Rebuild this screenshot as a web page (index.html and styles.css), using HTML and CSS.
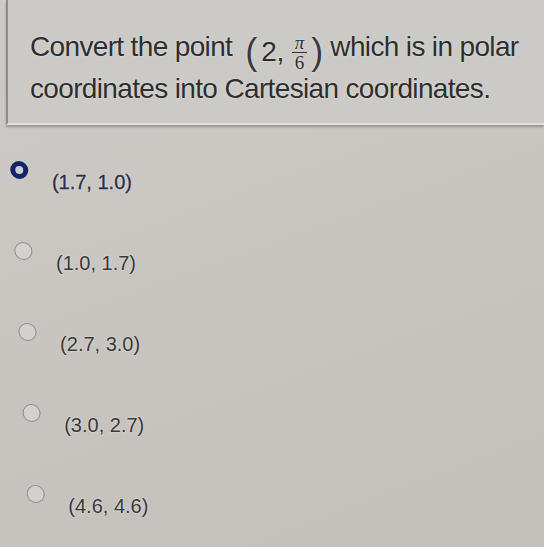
FILE: index.html
```html
<!DOCTYPE html>
<html lang="en">
<head>
<meta charset="utf-8">
<title>Polar to Cartesian</title>
<link rel="stylesheet" href="styles.css">
</head>
<body>
<div class="page">
  <div class="question">
    <p class="prompt">Convert the point <span class="math"><span class="paren">(</span><span class="num">2,</span><span class="frac"><span class="top">π</span><span class="bot">6</span></span><span class="paren">)</span></span> which is in polar coordinates into Cartesian coordinates.</p>
  </div>
  <ul class="options">
    <li class="option"><span class="radio radio-on"></span><span class="label label-on">(1.7, 1.0)</span></li>
    <li class="option"><span class="radio"></span><span class="label">(1.0, 1.7)</span></li>
    <li class="option"><span class="radio"></span><span class="label">(2.7, 3.0)</span></li>
    <li class="option"><span class="radio"></span><span class="label">(3.0, 2.7)</span></li>
    <li class="option"><span class="radio"></span><span class="label">(4.6, 4.6)</span></li>
  </ul>
</div>
</body>
</html>
```

FILE: styles.css
```css
html, body {
  margin: 0;
  padding: 0;
}
body {
  width: 544px;
  height: 547px;
  overflow: hidden;
  font-family: "Liberation Sans", Arial, sans-serif;
  background: linear-gradient(160deg, #cdcac7 0%, #c8c5c1 50%, #c3c0bc 100%);
}
.page {
  width: 544px;
  height: 547px;
}
.question {
  margin-left: 6px;
  height: 125px;
  box-sizing: border-box;
  background: #cccac7;
  border-left: 2px solid #8e8c8a;
  border-bottom: 2px solid #e2e0dd;
  box-shadow: 0 2px 2px rgba(90, 88, 85, 0.45);
  padding: 28px 6px 0 22px;
}
.prompt {
  margin: 0;
  font-size: 28px;
  letter-spacing: -0.65px;
  line-height: 37px;
  color: #2e2e2e;
  text-shadow: 0 0 2px rgba(255, 255, 255, 0.6);
}
.math {
  display: inline-flex;
  align-items: center;
  vertical-align: -8px;
  height: 37px;
  margin-left: 6px;
  letter-spacing: 0;
}
.paren {
  font-size: 36px;
  line-height: 37px;
  color: #3a3a3a;
}
.num {
  margin: 0 3px 0 4px;
  font-size: 28px;
  letter-spacing: -0.5px;
}
.frac {
  display: inline-flex;
  flex-direction: column;
  align-items: center;
  font-family: "Liberation Serif", "Times New Roman", serif;
  font-size: 19px;
  line-height: 14px;
  margin: 3px 4px 0 5px;
}
.frac .top {
  font-style: italic;
  padding: 0 3px 2px;
  border-bottom: 1.5px solid #333;
}
.frac .bot {
  padding-top: 3px;
}
.options {
  list-style: none;
  margin: 0;
  padding: 35px 0 0 0;
  transform: skewX(2.9deg);
  transform-origin: 0 0;
}
.option {
  display: flex;
  align-items: flex-start;
  height: 81px;
}
.radio {
  flex: none;
  box-sizing: border-box;
  width: 18px;
  height: 18px;
  margin: 1px 0 0 8px;
  border-radius: 50%;
  border: 1.6px solid #8d8b89;
  background: #d3d1ce;
}
.radio-on {
  border: 5px solid #16236b;
  background: #c9cbd6;
}
.label {
  margin: 11px 0 0 23px;
  font-size: 20px;
  line-height: 22px;
  color: #383838;
  transform: skewX(-2.9deg);
  text-shadow: 0 0 2px rgba(255, 255, 255, 0.7);
}
.label-on {
  color: #2b2e48;
  font-weight: 500;
  -webkit-text-stroke: 0.3px #2b2e48;
}
```
